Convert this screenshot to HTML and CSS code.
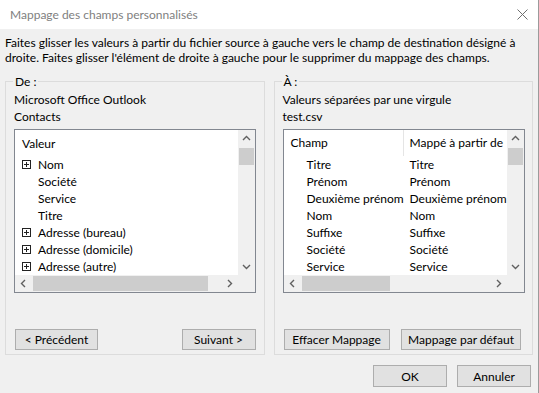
FILE: index.html
```html
<!DOCTYPE html>
<html lang="fr">
<head>
    <meta charset="UTF-8">
    <meta name="viewport" content="width=device-width, initial-scale=1.0">
    <title>Mappage des champs personnalisés</title>
    <link rel="stylesheet" href="styles.css">
</head>
<body>

<div class="window">
    <div class="titlebar">
        <span class="title">Mappage des champs personnalisés</span>
        <svg class="close" width="11" height="11" viewBox="0 0 11 11">
            <path d="M0.5 0.5 L10.5 10.5 M10.5 0.5 L0.5 10.5" stroke="#6f6f6f" stroke-width="1" fill="none"/>
        </svg>
    </div>

    <div class="dialog">
        <p class="intro">Faites glisser les valeurs à partir du fichier source à gauche vers le champ de destination désigné à<br>droite. Faites glisser l'élément de droite à gauche pour le supprimer du mappage des champs.</p>

        <div class="groups">
            <!-- source side -->
            <fieldset class="group">
                <legend>De :</legend>
                <div class="source">Microsoft Office Outlook</div>
                <div class="source">Contacts</div>
                <div class="list">
                    <div class="list-view">
                        <div class="list-head"><span class="head-cell">Valeur</span></div>
                        <div class="row"><svg class="expander" width="9" height="9" viewBox="0 0 9 9"><rect x="0.5" y="0.5" width="8" height="8" fill="none" stroke="#222"/><path d="M2 4.5 H7 M4.5 2 V7" stroke="#222"/></svg>Nom</div>
                        <div class="row leaf">Société</div>
                        <div class="row leaf">Service</div>
                        <div class="row leaf">Titre</div>
                        <div class="row"><svg class="expander" width="9" height="9" viewBox="0 0 9 9"><rect x="0.5" y="0.5" width="8" height="8" fill="none" stroke="#222"/><path d="M2 4.5 H7 M4.5 2 V7" stroke="#222"/></svg>Adresse (bureau)</div>
                        <div class="row"><svg class="expander" width="9" height="9" viewBox="0 0 9 9"><rect x="0.5" y="0.5" width="8" height="8" fill="none" stroke="#222"/><path d="M2 4.5 H7 M4.5 2 V7" stroke="#222"/></svg>Adresse (domicile)</div>
                        <div class="row"><svg class="expander" width="9" height="9" viewBox="0 0 9 9"><rect x="0.5" y="0.5" width="8" height="8" fill="none" stroke="#222"/><path d="M2 4.5 H7 M4.5 2 V7" stroke="#222"/></svg>Adresse (autre)</div>
                    </div>
                    <div class="vscroll">
                        <svg class="arrow" width="17" height="17" viewBox="0 0 17 17"><path d="M5 10 L8.5 6.5 L12 10" stroke="#606060" stroke-width="1.4" fill="none"/></svg>
                        <div class="thumb-v"></div>
                        <div class="track"></div>
                        <svg class="arrow" width="17" height="17" viewBox="0 0 17 17"><path d="M5 7 L8.5 10.5 L12 7" stroke="#606060" stroke-width="1.4" fill="none"/></svg>
                    </div>
                    <div class="hscroll">
                        <svg class="arrow" width="17" height="17" viewBox="0 0 17 17"><path d="M10 5 L6.5 8.5 L10 12" stroke="#606060" stroke-width="1.4" fill="none"/></svg>
                        <div class="thumb-h thumb-left"></div>
                        <div class="track"></div>
                        <svg class="arrow" width="17" height="17" viewBox="0 0 17 17"><path d="M7 5 L10.5 8.5 L7 12" stroke="#606060" stroke-width="1.4" fill="none"/></svg>
                    </div>
                    <div class="corner"></div>
                </div>
                <div class="group-buttons">
                    <button class="btn btn-prev">&lt; Précédent</button>
                    <button class="btn btn-next">Suivant &gt;</button>
                </div>
            </fieldset>

            <!-- destination side -->
            <fieldset class="group">
                <legend>À :</legend>
                <div class="source">Valeurs séparées par une virgule</div>
                <div class="source">test.csv</div>
                <div class="list">
                    <div class="list-view">
                        <div class="list-head map-row">
                            <span class="head-cell divider">Champ</span>
                            <span class="head-cell second">Mappé à partir de</span>
                        </div>
                        <div class="row map-row"><span class="field">Titre</span><span class="mapped">Titre</span></div>
                        <div class="row map-row"><span class="field">Prénom</span><span class="mapped">Prénom</span></div>
                        <div class="row map-row"><span class="field">Deuxième prénom</span><span class="mapped">Deuxième prénom</span></div>
                        <div class="row map-row"><span class="field">Nom</span><span class="mapped">Nom</span></div>
                        <div class="row map-row"><span class="field">Suffixe</span><span class="mapped">Suffixe</span></div>
                        <div class="row map-row"><span class="field">Société</span><span class="mapped">Société</span></div>
                        <div class="row map-row"><span class="field">Service</span><span class="mapped">Service</span></div>
                    </div>
                    <div class="vscroll">
                        <svg class="arrow" width="17" height="17" viewBox="0 0 17 17"><path d="M5 10 L8.5 6.5 L12 10" stroke="#606060" stroke-width="1.4" fill="none"/></svg>
                        <div class="thumb-v"></div>
                        <div class="track"></div>
                        <svg class="arrow" width="17" height="17" viewBox="0 0 17 17"><path d="M5 7 L8.5 10.5 L12 7" stroke="#606060" stroke-width="1.4" fill="none"/></svg>
                    </div>
                    <div class="hscroll">
                        <svg class="arrow" width="17" height="17" viewBox="0 0 17 17"><path d="M10 5 L6.5 8.5 L10 12" stroke="#606060" stroke-width="1.4" fill="none"/></svg>
                        <div class="thumb-h thumb-right"></div>
                        <div class="track"></div>
                        <svg class="arrow" width="17" height="17" viewBox="0 0 17 17"><path d="M7 5 L10.5 8.5 L7 12" stroke="#606060" stroke-width="1.4" fill="none"/></svg>
                    </div>
                    <div class="corner"></div>
                </div>
                <div class="group-buttons right-buttons">
                    <button class="btn btn-clear">Effacer Mappage</button>
                    <button class="btn btn-default">Mappage par défaut</button>
                </div>
            </fieldset>
        </div>

        <div class="footer">
            <button class="btn btn-footer">OK</button>
            <button class="btn btn-footer">Annuler</button>
        </div>
    </div>
</div>

</body>
</html>
```

FILE: styles.css
```css
* {
    box-sizing: border-box;
}

body {
    margin: 0;
    font-family: Lato, "Noto Sans", sans-serif;
    font-size: 12px;
    color: #000;
    background-color: #f0f0f0;
}

.window {
    width: 539px;
    height: 393px;
    background-color: #f0f0f0;
    border-right: 1px solid #9b9b9b;
    display: flex;
    flex-direction: column;
}

.titlebar {
    height: 29px;
    background-color: #fff;
    display: flex;
    align-items: center;
    justify-content: space-between;
    padding: 0 10px;
    color: #808080;
}

.close {
    display: block;
}

.dialog {
    flex: 1;
    display: flex;
    flex-direction: column;
    padding: 6px 5px 0;
}

.intro {
    margin: 0;
    line-height: 15px;
    white-space: nowrap;
}

.groups {
    display: flex;
    gap: 9px;
    margin-top: 9px;
}

.group {
    width: 260px;
    margin: 0;
    min-width: 0;
    padding: 2px 8px 4px;
    border: 1px solid #dcdcdc;
    display: flex;
    flex-direction: column;
}

.group legend {
    padding: 0 2px;
    margin-left: -1px;
    line-height: 15px;
}

.source {
    line-height: 17px;
    white-space: nowrap;
}

.list {
    margin-top: 4px;
    width: 242px;
    height: 164px;
    border: 1px solid #828790;
    background-color: #fff;
    display: grid;
    grid-template-columns: 223px 17px;
    grid-template-rows: 145px 17px;
}

.list-view {
    overflow: hidden;
}

.list-head {
    height: 26px;
    display: flex;
    align-items: center;
}

.head-cell {
    padding-left: 7px;
}

.row {
    height: 17px;
    display: flex;
    align-items: center;
    padding-left: 7px;
    white-space: nowrap;
}

.row.leaf {
    padding-left: 23px;
}

.expander {
    display: block;
    margin-right: 7px;
    flex-shrink: 0;
}

.map-row {
    display: grid;
    grid-template-columns: 120px 1fr;
    align-items: center;
    padding-left: 0;
}

.list-head.map-row .head-cell {
    height: 26px;
    line-height: 26px;
    white-space: nowrap;
    overflow: hidden;
}

.head-cell.divider {
    border-right: 1px solid #e5e5e5;
}

.head-cell.second {
    padding-left: 6px;
}

.field {
    padding-left: 23px;
    overflow: hidden;
}

.mapped {
    padding-left: 6px;
    overflow: hidden;
}

.vscroll {
    background-color: #f0f0f0;
    display: flex;
    flex-direction: column;
}

.hscroll {
    background-color: #f0f0f0;
    display: flex;
}

.arrow {
    display: block;
    flex-shrink: 0;
}

.track {
    flex: 1;
}

.thumb-v {
    height: 17px;
    margin: 1px 1px 0;
    background-color: #cdcdcd;
}

.thumb-h {
    margin: 1px 0 1px 1px;
    background-color: #cdcdcd;
}

.thumb-left {
    width: 175px;
}

.thumb-right {
    width: 88px;
}

.corner {
    background-color: #f0f0f0;
}

.group-buttons {
    margin-top: 36px;
    display: flex;
    justify-content: space-between;
    padding-left: 1px;
}

.right-buttons {
    padding-right: 3px;
}

.btn {
    font: inherit;
    color: #000;
    height: 21px;
    padding: 0;
    background-color: #e1e1e1;
    border: 1px solid #adadad;
}

.btn-prev {
    width: 83px;
}

.btn-next {
    width: 74px;
}

.btn-clear {
    width: 106px;
}

.btn-default {
    width: 120px;
}

.footer {
    margin-top: 10px;
    display: flex;
    justify-content: flex-end;
    gap: 10px;
    padding-right: 2px;
}

.btn-footer {
    width: 74px;
    height: 22px;
}
```
